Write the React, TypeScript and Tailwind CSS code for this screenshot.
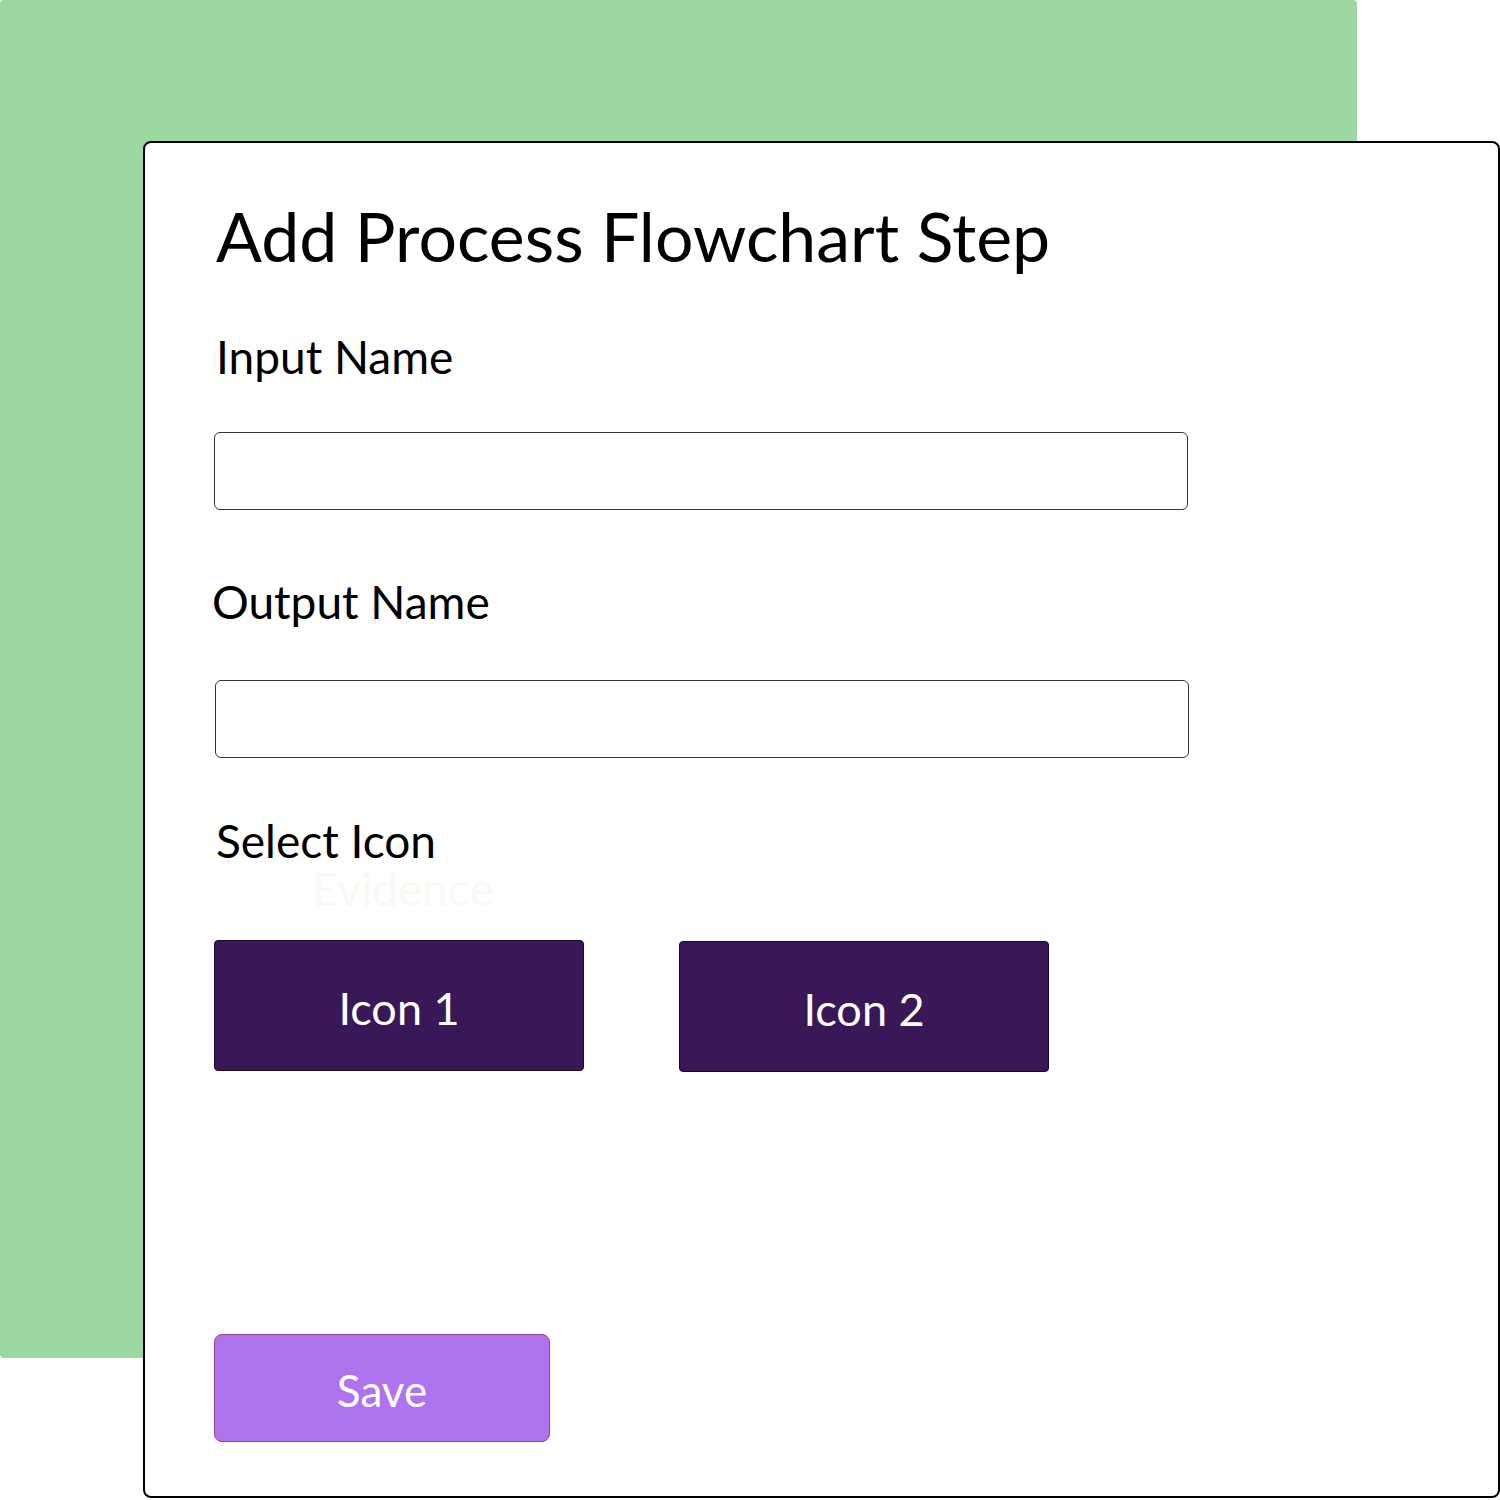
import * as React from 'react';

const font = { fontFamily: 'Lato, "Open Sans", sans-serif' };

export default function App() {
    return (
        <div className="relative h-[1500px] w-[1500px] overflow-hidden bg-white" style={font}>
            <div className="h-[1358px] w-[1357px] rounded-[4px] bg-[#9bd9a0]" />

            <div className="absolute left-[143px] top-[141px] flex h-[1357px] w-[1357px] flex-col rounded-[8px] border-2 border-black bg-white pl-[69px] pt-[59px]">
                <h1 className="ml-[2px] text-[68px] leading-none text-black">Add Process Flowchart Step</h1>

                <label className="ml-[2px] mt-[64px] text-[46px] leading-none text-black">Input Name</label>
                <input className="mt-[52px] h-[78px] w-[974px] rounded-[6px] border border-[#333] bg-white" />

                <label className="-ml-[2px] mt-[69px] text-[46px] leading-none text-black">Output Name</label>
                <input className="ml-[1px] mt-[55px] h-[78px] w-[974px] rounded-[6px] border border-[#333] bg-white" />

                <div className="relative">
                    <label className="ml-[2px] mt-[60px] block text-[46px] leading-none text-black">Select Icon</label>
                    <span className="absolute left-[98px] top-[108px] text-[46px] leading-none text-[#fbf8f4]">Evidence</span>
                </div>

                <div className="mt-[76px] flex gap-[95px]">
                    <button className="flex h-[131px] w-[370px] items-center justify-center rounded-[4px] border border-[#1a0b28] bg-[#3a1858] pt-[5px] text-[45px] leading-none text-white">
                        Icon 1
                    </button>
                    <button className="mt-[1px] flex h-[131px] w-[370px] items-center justify-center rounded-[4px] border border-[#1a0b28] bg-[#3a1858] pt-[5px] text-[45px] leading-none text-white">
                        Icon 2
                    </button>
                </div>

                <button className="mt-[262px] flex h-[108px] w-[336px] items-center justify-center rounded-[8px] border border-[#a0408a] bg-[#b073f0] pt-[4px] text-[44px] leading-none text-white">
                    Save
                </button>
            </div>
        </div>
    );
}
